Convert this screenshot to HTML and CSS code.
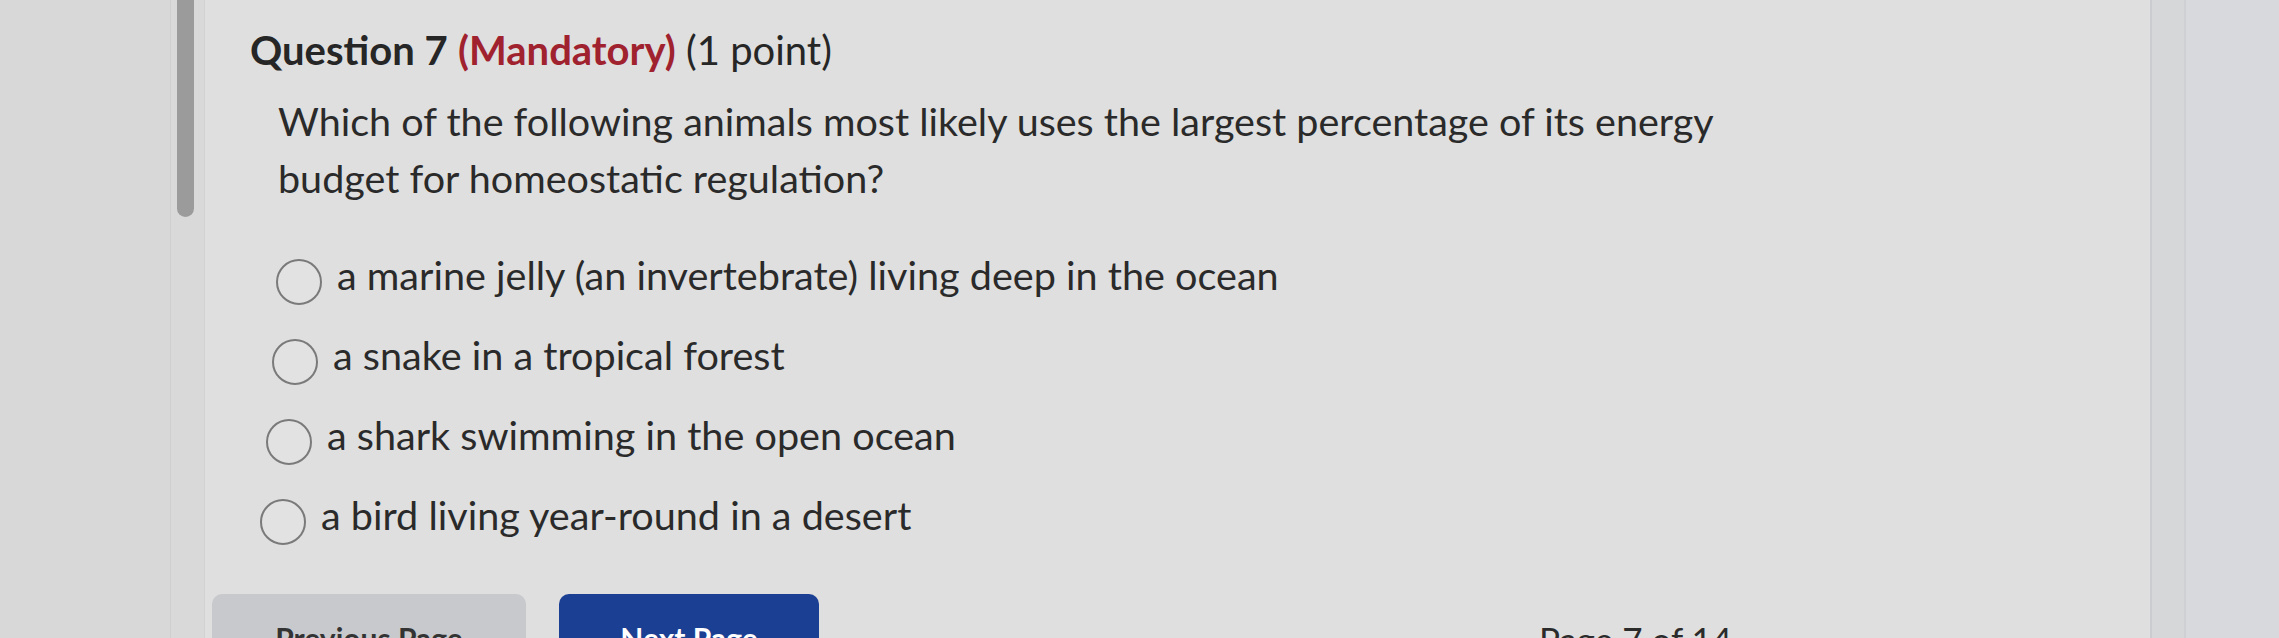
FILE: index.html
```html
<!DOCTYPE html>
<html lang="en">
<head>
<meta charset="utf-8">
<title>Question 7</title>
<link rel="stylesheet" href="styles.css">
</head>
<body>
<div class="screen">
  <div class="gutter"></div>
  <div class="track"><div class="thumb"></div></div>
  <main class="content">
    <h2 class="title"><span class="q">Question 7</span> <span class="req">(Mandatory)</span> (1 point)</h2>
    <p class="stem">Which of the following animals most likely uses the largest percentage of its energy<br>budget for homeostatic regulation?</p>
    <ul class="options">
      <li class="opt"><span class="radio"></span><span class="label">a marine jelly (an invertebrate) living deep in the ocean</span></li>
      <li class="opt"><span class="radio"></span><span class="label">a snake in a tropical forest</span></li>
      <li class="opt"><span class="radio"></span><span class="label">a shark swimming in the open ocean</span></li>
      <li class="opt"><span class="radio"></span><span class="label">a bird living year-round in a desert</span></li>
    </ul>
    <div class="nav">
      <button class="btn prev">Previous Page</button>
      <button class="btn next">Next Page</button>
      <span class="pager">Page 7 of 14</span>
    </div>
  </main>
  <div class="edge"></div>
  <div class="side"></div>
</div>
</body>
</html>
```
FILE: styles.css
```css
* { box-sizing: border-box; }
html, body {
  margin: 0;
  padding: 0;
  width: 2279px;
  height: 638px;
  overflow: hidden;
  background: #dcdcdc;
  font-family: "Lato", "Liberation Sans", sans-serif;
  color: #2b2b2b;
}
.screen {
  display: flex;
  width: 2279px;
  height: 638px;
}
.gutter {
  width: 170px;
  flex: none;
  background: #d8d8d8;
}
.track {
  width: 35px;
  flex: none;
  background: #d9d9d9;
  border-left: 1px solid #cfcfcf;
  border-right: 1px solid #d2d2d2;
  padding-left: 6px;
}
.thumb {
  width: 17px;
  height: 217px;
  background: #9b9b9b;
  border-radius: 0 0 9px 9px;
}
.content {
  width: 1945px;
  flex: none;
  background: #dfdfdf;
  padding-top: 28px;
}
.title {
  margin: 0 0 0 45px;
  font-size: 40px;
  line-height: 44px;
  font-weight: 400;
  color: #262626;
  white-space: nowrap;
}
.title .q { font-weight: 700; }
.title .req { font-weight: 700; color: #a0222f; }
.stem {
  margin: 20px 0 0 73px;
  font-size: 39.5px;
  line-height: 57px;
  color: #2a2a2a;
  white-space: nowrap;
}
.options {
  list-style: none;
  margin: 45px 0 0 0;
  padding: 0;
  display: flex;
  flex-direction: column;
  gap: 32px;
}
.opt {
  display: flex;
  align-items: flex-start;
  height: 48px;
  font-size: 39.6px;
  line-height: 48px;
  color: #2a2a2a;
  white-space: nowrap;
}
.opt:nth-child(1) { margin-left: 71px; }
.opt:nth-child(2) { margin-left: 67px; }
.opt:nth-child(3) { margin-left: 61px; }
.opt:nth-child(4) { margin-left: 55px; }
.radio {
  width: 46px;
  height: 46px;
  flex: none;
  margin-top: 8px;
  margin-right: 15px;
  border: 2px solid #7a7a7a;
  border-radius: 50%;
  background: #e2e2e2;
}
.nav {
  display: flex;
  align-items: flex-start;
  margin-top: 55px;
  margin-left: 7px;
}
.btn {
  height: 100px;
  border: none;
  border-radius: 10px;
  font-family: "Lato", "Liberation Sans", sans-serif;
  font-size: 30px;
  font-weight: 700;
  line-height: 40px;
  padding: 24px 0 36px 0;
  text-align: center;
  display: block;
  flex: none;
}
.prev {
  width: 314px;
  background: #c8c9cc;
  color: #333;
}
.next {
  width: 260px;
  margin-left: 33px;
  background: #1b3f92;
  color: #fff;
}
.pager {
  margin-left: 720px;
  padding-top: 25px;
  font-size: 35px;
  line-height: 40px;
  color: #2b2b2b;
  white-space: nowrap;
}
.edge {
  width: 36px;
  flex: none;
  background: #d6d7d9;
  border-left: 2px solid #cbcccf;
  border-right: 2px solid #cfd0d3;
}
.side {
  flex: 1;
  background: #d8d9dc;
}
```
